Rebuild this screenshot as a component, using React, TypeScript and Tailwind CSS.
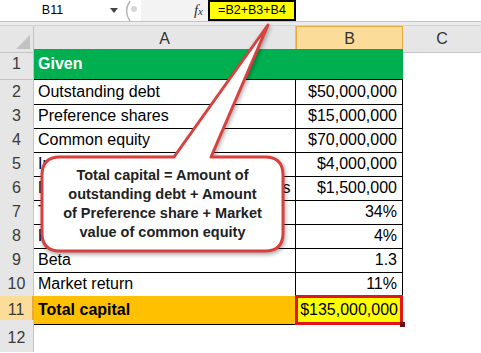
import React from 'react';

const rows = [
  { n: 2, label: 'Outstanding debt', value: '$50,000,000' },
  { n: 3, label: 'Preference shares', value: '$15,000,000' },
  { n: 4, label: 'Common equity', value: '$70,000,000' },
  { n: 5, label: 'Interest expense', value: '$4,000,000' },
  { n: 6, label: 'Dividend paid on preference shares', value: '$1,500,000' },
  { n: 7, label: 'Tax rate', value: '34%' },
  { n: 8, label: 'Risk-free rate', value: '4%' },
  { n: 9, label: 'Beta', value: '1.3' },
  { n: 10, label: 'Market return', value: '11%' },
];

const grid = 'grid grid-cols-[34px_262px_107px_1fr]';
const rowHead = 'flex items-center justify-center bg-[#e6e6e6] border-r border-b border-[#c4c4c4] text-[#3a3a3a]';

export default function App() {
  return (
    <div className="relative w-[481px] h-[353px] overflow-hidden bg-white font-['Liberation_Sans',Arial,sans-serif] text-[16px] text-black">
      {/* Formula bar */}
      <div className="flex h-[22px] border-b border-[#c3c3c3] text-[12.5px]">
        <div className="flex w-[121px] items-center bg-white">
          <span className="w-[105px] text-center">B11</span>
          <svg width="8" height="5" viewBox="0 0 8 5" className="ml-[5px]">
            <path d="M0 0h8L4 5z" fill="#444" />
          </svg>
        </div>
        <div className="flex w-[20px] items-center bg-white">
          <svg width="20" height="22" viewBox="0 0 20 22">
            <path d="M9 1 Q2 11 9 21" fill="none" stroke="#b5b5b5" strokeWidth="1.5" />
            <circle cx="13" cy="9" r="3" fill="#d6d6d6" />
          </svg>
        </div>
        <div className="flex w-[67px] items-center justify-end bg-[#f3f3f3] pr-[5px]">
          <span className="font-['Liberation_Serif',serif] text-[15px] italic text-[#333]">
            f<span className="text-[11px]">x</span>
          </span>
        </div>
        <div className="flex w-[88px] items-center justify-center border-2 border-black bg-[#ffff00]">
          =B2+B3+B4
        </div>
        <div className="flex-1 bg-white" />
      </div>
      <div className="h-[4px] border-b border-[#d2d2d2] bg-[#ececec]" />

      {/* Column headers */}
      <div className={`${grid} h-[23px]`}>
        <div className="relative bg-[#e6e6e6] border-r border-b border-[#c4c4c4]">
          <svg width="14" height="14" viewBox="0 0 14 14" className="absolute right-[3px] bottom-[3px]">
            <path d="M14 0V14H0z" fill="#c2c2c2" />
          </svg>
        </div>
        <div className="flex items-center justify-center bg-[#e6e6e6] border-r border-b border-[#c4c4c4] text-[#333]">A</div>
        <div className="flex items-center justify-center bg-[#fbdc98] border border-b-2 border-[#eaa93e] text-[#333]">B</div>
        <div className="flex items-center justify-center bg-[#e6e6e6] border-b border-[#c4c4c4] text-[#333]">C</div>
      </div>

      {/* Row 1 */}
      <div className={`${grid} h-[31px]`}>
        <div className={rowHead}>1</div>
        <div className="col-span-2 flex items-center bg-[#00b050] border-b border-black pl-[4px] font-bold text-white">Given</div>
        <div />
      </div>

      {rows.map((r) => (
        <div key={r.n} className={`${grid} h-[24px]`}>
          <div className={rowHead}>{r.n}</div>
          <div className="flex items-center overflow-hidden whitespace-nowrap border-r border-b border-black pl-[4px]">{r.label}</div>
          <div className="flex items-center justify-end border-r border-b border-black pr-[5px]">{r.value}</div>
          <div />
        </div>
      ))}

      {/* Row 11 */}
      <div className={`${grid} h-[24px]`}>
        <div className="flex items-center justify-center bg-[#fbdc98] border-r-2 border-b border-[#eaa93e] text-[#3a3a3a]">11</div>
        <div className="flex items-center bg-[#ffc000] border-b border-black pl-[4px] font-bold">Total capital</div>
        <div className="relative -ml-[1px] -mt-[1px] flex items-center justify-end border-[3px] border-[#e4141b] bg-[#ffff00] pr-[2px]">
          $135,000,000
          <span className="absolute -right-[5px] -bottom-[5px] h-[5px] w-[5px] bg-[#6b1010]" />
        </div>
        <div />
      </div>

      {/* Row 12 */}
      <div className={`${grid} h-[32px]`}>
        <div className="flex items-end justify-center bg-[#e6e6e6] border-r border-[#c4c4c4] pb-[2px] text-[#3a3a3a]">12</div>
        <div />
        <div />
        <div />
      </div>

      {/* Callout */}
      <svg
        width="481"
        height="353"
        viewBox="0 0 481 353"
        className="pointer-events-none absolute left-0 top-0 drop-shadow-[1px_2px_2px_rgba(0,0,0,0.35)]"
      >
        <path
          d="M268 25 L211 157 H265 Q283 157 283 175 V233 Q283 251 265 251 H60 Q42 251 42 233 V175 Q42 157 60 157 H174 Z"
          fill="#fff"
          stroke="#d9413f"
          strokeWidth="3"
          strokeLinejoin="round"
        />
      </svg>
      <div className="absolute left-[42px] top-[157px] flex h-[94px] w-[241px] items-center justify-center text-center text-[14.5px] font-bold leading-[19px] text-[#222]">
        <p>
          Total capital = Amount of
          <br />
          outstanding debt + Amount
          <br />
          of Preference share + Market
          <br />
          value of common equity
        </p>
      </div>
    </div>
  );
}
